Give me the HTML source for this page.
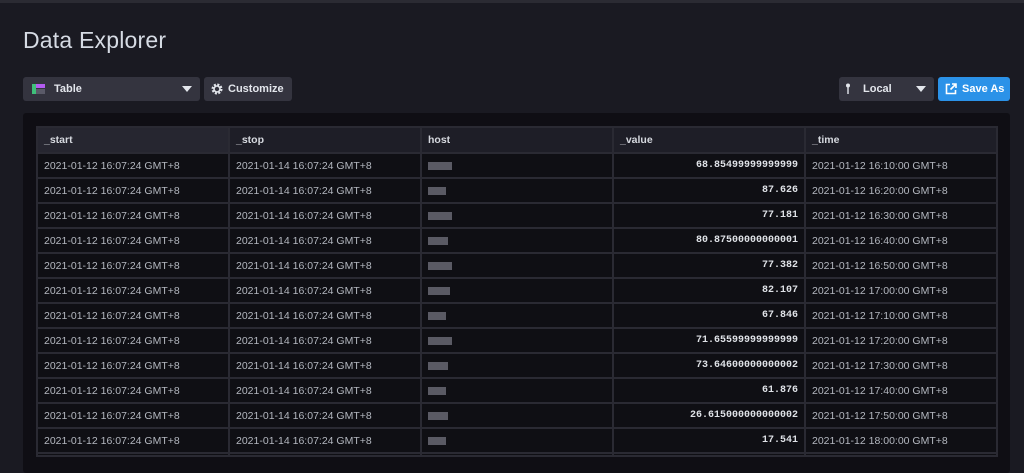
<!DOCTYPE html>
<html><head><meta charset="utf-8"><style>
*{margin:0;padding:0;box-sizing:border-box}
body{width:1024px;height:468px;background:#1a1a22;font-family:"Liberation Sans",sans-serif;overflow:hidden;position:relative;color:#bfc3cc}
.top{position:absolute;left:0;top:0;width:1024px;height:3px;background:#2b2b33}
h1{position:absolute;left:23px;top:27px;font-size:23px;font-weight:normal;color:#d6dbe4;letter-spacing:0.2px}
.btn{position:absolute;top:77px;height:24px;background:#34343f;border-radius:3px;font-size:11px;font-weight:bold;color:#e3e6ec;line-height:24px}
.panel{position:absolute;left:23px;top:113px;width:987px;height:360px;background:#0f0e14;border-radius:3px}
table{position:absolute;left:36px;top:126px;border-collapse:collapse;table-layout:fixed;background:#0f0f14;border:2px solid #2a2a33}
td,th{border:2px solid #2a2a33;height:25px;font-size:10.5px;padding:0 6px;white-space:nowrap;overflow:hidden;color:#b4b8c0;text-align:left}
th{background:#1e1e27;color:#d6d9df;font-weight:bold;height:26px}
th.s{background:#262630}
td.v{text-align:right;font-family:"Liberation Mono",monospace;font-weight:bold;color:#dfe2e7;font-size:10px}
.hb{display:inline-block;height:8px;background:#5a5a64;vertical-align:middle}
</style></head><body>
<div class="top"></div>
<h1>Data Explorer</h1>
<div class="btn" style="left:23px;width:177px;padding-left:31px">
<svg style="position:absolute;left:9px;top:7px" width="13" height="10"><rect x="0" y="0" width="4" height="10" fill="#3fc07a"/><rect x="4" y="0" width="9" height="4" fill="#b35cf0"/><rect x="4" y="5" width="9" height="5" fill="#5a5a68"/></svg>Table
<svg style="position:absolute;right:8px;top:9px" width="10" height="6"><path d="M0 0H10L5 6Z" fill="#e3e6ec"/></svg></div>
<div class="btn" style="left:204px;width:88px;padding-left:24px">
<svg style="position:absolute;left:7px;top:6px" width="12" height="12" viewBox="0 0 12 12"><circle cx="6" cy="6" r="4.3" fill="none" stroke="#e3e6ec" stroke-width="2.4" stroke-dasharray="2 1.4"/><circle cx="6" cy="6" r="3" fill="none" stroke="#e3e6ec" stroke-width="1.6"/></svg>Customize</div>
<div class="btn" style="left:839px;width:95px;padding-left:24px">
<svg style="position:absolute;left:6px;top:6px" width="6" height="12"><circle cx="3" cy="2.5" r="2" fill="#e3e6ec"/><rect x="2.3" y="3" width="1.4" height="8" fill="#e3e6ec"/></svg>Local
<svg style="position:absolute;right:8px;top:9px" width="10" height="6"><path d="M0 0H10L5 6Z" fill="#e3e6ec"/></svg></div>
<div class="btn" style="left:938px;width:72px;padding-left:24px;background:#2b92e8;color:#fff">
<svg style="position:absolute;left:7px;top:6px" width="12" height="12" viewBox="0 0 12 12"><path d="M5 1.5H1.5V10.5H10.5V7" fill="none" stroke="#fff" stroke-width="1.6"/><path d="M7 1H11V5M11 1L5.5 6.5" fill="none" stroke="#fff" stroke-width="1.6"/></svg>Save As</div>
<div class="panel"></div>
<table>
<colgroup><col style="width:192px"><col style="width:192px"><col style="width:192px"><col style="width:192px"><col style="width:192px"></colgroup>
<tr><th class="s">_start</th><th>_stop</th><th>host</th><th>_value</th><th>_time</th></tr>
<tr><td>2021-01-12 16:07:24 GMT+8</td><td>2021-01-14 16:07:24 GMT+8</td><td><span class="hb" style="width:24px"></span></td><td class="v">68.85499999999999</td><td>2021-01-12 16:10:00 GMT+8</td></tr>
<tr><td>2021-01-12 16:07:24 GMT+8</td><td>2021-01-14 16:07:24 GMT+8</td><td><span class="hb" style="width:18px"></span></td><td class="v">87.626</td><td>2021-01-12 16:20:00 GMT+8</td></tr>
<tr><td>2021-01-12 16:07:24 GMT+8</td><td>2021-01-14 16:07:24 GMT+8</td><td><span class="hb" style="width:24px"></span></td><td class="v">77.181</td><td>2021-01-12 16:30:00 GMT+8</td></tr>
<tr><td>2021-01-12 16:07:24 GMT+8</td><td>2021-01-14 16:07:24 GMT+8</td><td><span class="hb" style="width:20px"></span></td><td class="v">80.87500000000001</td><td>2021-01-12 16:40:00 GMT+8</td></tr>
<tr><td>2021-01-12 16:07:24 GMT+8</td><td>2021-01-14 16:07:24 GMT+8</td><td><span class="hb" style="width:24px"></span></td><td class="v">77.382</td><td>2021-01-12 16:50:00 GMT+8</td></tr>
<tr><td>2021-01-12 16:07:24 GMT+8</td><td>2021-01-14 16:07:24 GMT+8</td><td><span class="hb" style="width:22px"></span></td><td class="v">82.107</td><td>2021-01-12 17:00:00 GMT+8</td></tr>
<tr><td>2021-01-12 16:07:24 GMT+8</td><td>2021-01-14 16:07:24 GMT+8</td><td><span class="hb" style="width:18px"></span></td><td class="v">67.846</td><td>2021-01-12 17:10:00 GMT+8</td></tr>
<tr><td>2021-01-12 16:07:24 GMT+8</td><td>2021-01-14 16:07:24 GMT+8</td><td><span class="hb" style="width:24px"></span></td><td class="v">71.65599999999999</td><td>2021-01-12 17:20:00 GMT+8</td></tr>
<tr><td>2021-01-12 16:07:24 GMT+8</td><td>2021-01-14 16:07:24 GMT+8</td><td><span class="hb" style="width:20px"></span></td><td class="v">73.64600000000002</td><td>2021-01-12 17:30:00 GMT+8</td></tr>
<tr><td>2021-01-12 16:07:24 GMT+8</td><td>2021-01-14 16:07:24 GMT+8</td><td><span class="hb" style="width:18px"></span></td><td class="v">61.876</td><td>2021-01-12 17:40:00 GMT+8</td></tr>
<tr><td>2021-01-12 16:07:24 GMT+8</td><td>2021-01-14 16:07:24 GMT+8</td><td><span class="hb" style="width:20px"></span></td><td class="v">26.615000000000002</td><td>2021-01-12 17:50:00 GMT+8</td></tr>
<tr><td>2021-01-12 16:07:24 GMT+8</td><td>2021-01-14 16:07:24 GMT+8</td><td><span class="hb" style="width:18px"></span></td><td class="v">17.541</td><td>2021-01-12 18:00:00 GMT+8</td></tr>
<tr><td style="height:3px"></td><td style="height:3px"></td><td style="height:3px"></td><td style="height:3px"></td><td style="height:3px"></td></tr>
</table>
</body></html>
